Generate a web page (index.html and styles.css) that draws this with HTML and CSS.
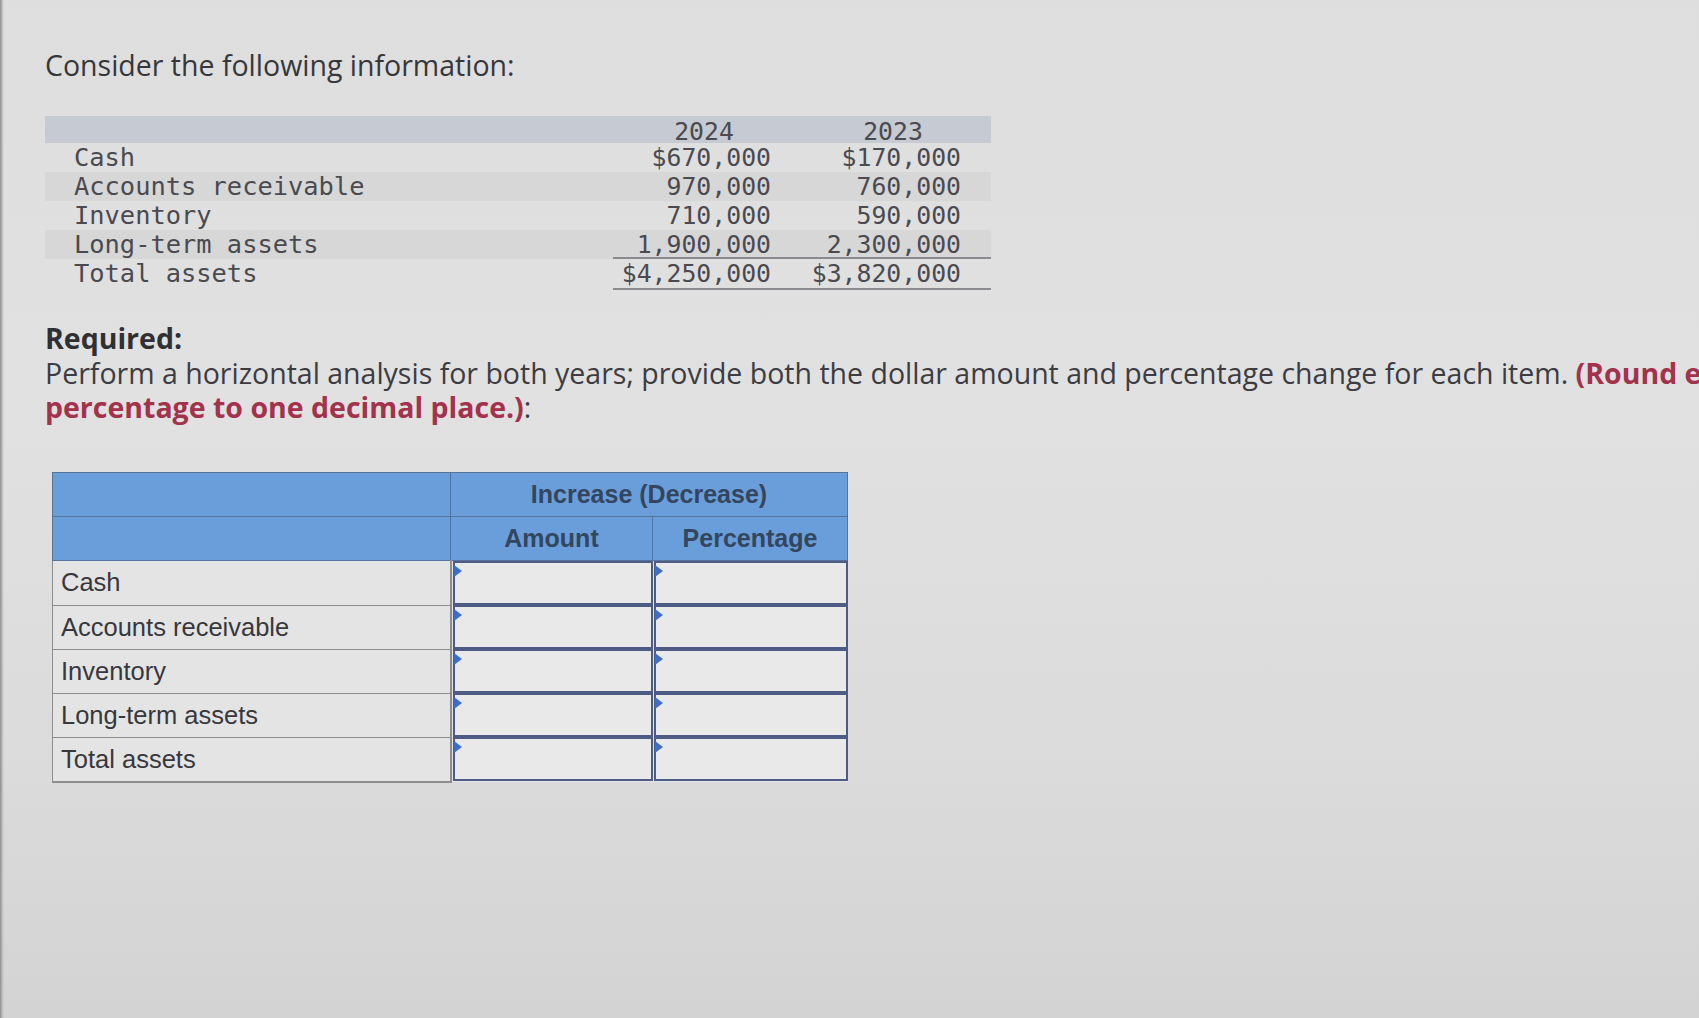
FILE: index.html
```html
<!DOCTYPE html>
<html lang="en">
<head>
<meta charset="utf-8">
<title>Horizontal analysis</title>
<link rel="stylesheet" href="styles.css">
</head>
<body>
<div class="page">
  <p class="intro">Consider the following information:</p>

  <div class="fin">
    <div class="fin-head fin-label"></div>
    <div class="fin-head fin-year">2024</div>
    <div class="fin-head fin-year">2023</div>

    <div class="fin-label">Cash</div>
    <div class="fin-num">$670,000</div>
    <div class="fin-num fin-last">$170,000</div>

    <div class="fin-label shade">Accounts receivable</div>
    <div class="fin-num shade">970,000</div>
    <div class="fin-num fin-last shade">760,000</div>

    <div class="fin-label">Inventory</div>
    <div class="fin-num">710,000</div>
    <div class="fin-num fin-last">590,000</div>

    <div class="fin-label shade">Long-term assets</div>
    <div class="fin-num shade sub">1,900,000</div>
    <div class="fin-num fin-last shade sub">2,300,000</div>

    <div class="fin-label">Total assets</div>
    <div class="fin-num total">$4,250,000</div>
    <div class="fin-num fin-last total">$3,820,000</div>
  </div>

  <div class="required">
    <p class="req-title">Required:</p>
    <p class="req-text">Perform a horizontal analysis for both years; provide both the dollar amount and percentage change for each item. <span class="red">(Round each</span><br><span class="red">percentage to one decimal place.)</span>:</p>
  </div>

  <table class="answer">
    <thead>
      <tr>
        <th class="blank"></th>
        <th colspan="2" class="group">Increase (Decrease)</th>
      </tr>
      <tr>
        <th class="blank"></th>
        <th class="sub-h amt">Amount</th>
        <th class="sub-h pct">Percentage</th>
      </tr>
    </thead>
    <tbody>
      <tr><td class="lbl">Cash</td><td class="inp"><div class="box"><span class="flag"></span></div></td><td class="inp"><div class="box"><span class="flag"></span></div></td></tr>
      <tr><td class="lbl">Accounts receivable</td><td class="inp"><div class="box"><span class="flag"></span></div></td><td class="inp"><div class="box"><span class="flag"></span></div></td></tr>
      <tr><td class="lbl">Inventory</td><td class="inp"><div class="box"><span class="flag"></span></div></td><td class="inp"><div class="box"><span class="flag"></span></div></td></tr>
      <tr><td class="lbl">Long-term assets</td><td class="inp"><div class="box"><span class="flag"></span></div></td><td class="inp"><div class="box"><span class="flag"></span></div></td></tr>
      <tr><td class="lbl">Total assets</td><td class="inp"><div class="box"><span class="flag"></span></div></td><td class="inp"><div class="box"><span class="flag"></span></div></td></tr>
    </tbody>
  </table>
</div>
</body>
</html>
```

FILE: styles.css
```css
html, body {
  margin: 0;
  padding: 0;
  height: 100%;
  overflow: hidden;
}

body {
  background:
    linear-gradient(90deg, #8d8d8d 0, #b9b9b9 2px, rgba(0,0,0,0) 4px),
    linear-gradient(180deg, #dedede 0%, #e1e1e1 40%, #dbdbdb 75%, #d3d3d3 100%);
  font-family: "Open Sans", "Liberation Sans", sans-serif;
  color: #3a3a3e;
}

.page {
  padding: 47px 0 0 45px;
  width: 1900px;
}

.intro {
  margin: 0;
  font-size: 28.5px;
  line-height: 36px;
  color: #37373b;
}

/* top data table */
.fin {
  margin-top: 33px;
  display: grid;
  grid-template-columns: 568px 182px 196px;
  width: 946px;
  font-family: "DejaVu Sans Mono", "Liberation Mono", monospace;
  font-size: 24.8px;
  color: #4a4a50;
}

.fin > div {
  height: 29px;
  line-height: 29px;
  white-space: nowrap;
}

.fin .fin-head {
  height: 27px;
  line-height: 31px;
  background: #c6cad2;
}

.fin-year {
  text-align: center;
}

.fin-label {
  padding-left: 29px;
  font-size: 25.4px;
}

.fin-num {
  text-align: right;
  padding-right: 24px;
}

.fin-last {
  padding-right: 30px;
}

.shade {
  background: #d7d7d8;
}

.fin .sub {
  border-bottom: 2px solid #8b8b8f;
  height: 27px;
}

.fin .total {
  border-bottom: 2px solid #8b8b8f;
  height: 29px;
}

/* required text */
.required {
  margin-top: 30px;
  white-space: nowrap;
}

.required p {
  margin: 0;
}

.req-title {
  font-size: 28.5px;
  font-weight: 700;
  line-height: 36px;
  color: #303034;
}

.req-text {
  font-size: 28.5px;
  line-height: 34px;
  color: #3c3c42;
}

.red {
  color: #a3324c;
  font-weight: 700;
}

/* answer table */
.answer {
  margin: 48px 0 0 7px;
  border-collapse: collapse;
  font-family: "Liberation Sans", Arial, sans-serif;
  font-size: 25px;
}

.answer th {
  background: #6a9edb;
  color: #34465e;
  font-weight: 700;
  height: 43px;
  padding: 0;
  border: 1px solid #56739c;
}

.answer .blank {
  width: 397px;
}

.answer .amt {
  width: 201px;
}

.answer .pct {
  width: 194px;
}

.answer td {
  padding: 0;
  height: 43px;
}

.answer .lbl {
  border: 1px solid #8d8d90;
  border-right: 2px solid #8d8d90;
  padding-left: 8px;
  font-size: 25.5px;
  color: #38383c;
  background: #e4e4e4;
}

.answer tbody tr:last-child .lbl {
  border-bottom: 2px solid #8d8d90;
}

.answer .inp {
  padding: 0;
  vertical-align: top;
  background: #e4e4e4;
}

.box {
  position: relative;
  margin: 0 0 0 1px;
  border: 2px solid #4e5c85;
  background: #e9e9e9;
  box-sizing: border-box;
  height: 44px;
}

.flag {
  position: absolute;
  left: -1px;
  top: 2px;
  width: 0;
  height: 0;
  border-top: 6px solid transparent;
  border-bottom: 6px solid transparent;
  border-left: 8px solid #3f6ec9;
}
```
